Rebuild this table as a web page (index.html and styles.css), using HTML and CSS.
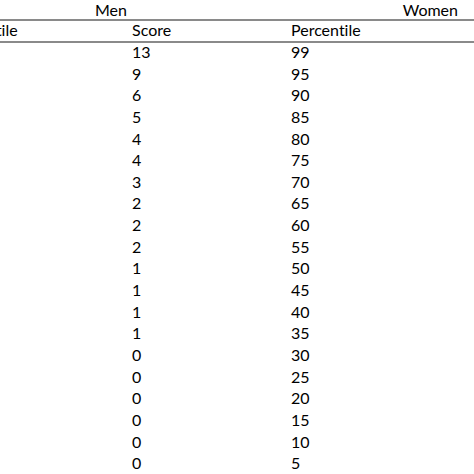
FILE: index.html
```html
<!DOCTYPE html>
<html>
<head>
<meta charset="utf-8">
<link rel="stylesheet" href="styles.css">
</head>
<body>
<div class="table">
  <div class="group-row">
    <span class="group men">Men</span>
    <span class="group women">Women</span>
  </div>
  <div class="row head">
    <span class="c1">Percentile</span>
    <span class="c2">Score</span>
    <span class="c3">Percentile</span>
  </div>
  <div class="body">
    <div class="row"><span class="c1"></span><span class="c2">13</span><span class="c3">99</span></div>
    <div class="row"><span class="c1"></span><span class="c2">9</span><span class="c3">95</span></div>
    <div class="row"><span class="c1"></span><span class="c2">6</span><span class="c3">90</span></div>
    <div class="row"><span class="c1"></span><span class="c2">5</span><span class="c3">85</span></div>
    <div class="row"><span class="c1"></span><span class="c2">4</span><span class="c3">80</span></div>
    <div class="row"><span class="c1"></span><span class="c2">4</span><span class="c3">75</span></div>
    <div class="row"><span class="c1"></span><span class="c2">3</span><span class="c3">70</span></div>
    <div class="row"><span class="c1"></span><span class="c2">2</span><span class="c3">65</span></div>
    <div class="row"><span class="c1"></span><span class="c2">2</span><span class="c3">60</span></div>
    <div class="row"><span class="c1"></span><span class="c2">2</span><span class="c3">55</span></div>
    <div class="row"><span class="c1"></span><span class="c2">1</span><span class="c3">50</span></div>
    <div class="row"><span class="c1"></span><span class="c2">1</span><span class="c3">45</span></div>
    <div class="row"><span class="c1"></span><span class="c2">1</span><span class="c3">40</span></div>
    <div class="row"><span class="c1"></span><span class="c2">1</span><span class="c3">35</span></div>
    <div class="row"><span class="c1"></span><span class="c2">0</span><span class="c3">30</span></div>
    <div class="row"><span class="c1"></span><span class="c2">0</span><span class="c3">25</span></div>
    <div class="row"><span class="c1"></span><span class="c2">0</span><span class="c3">20</span></div>
    <div class="row"><span class="c1"></span><span class="c2">0</span><span class="c3">15</span></div>
    <div class="row"><span class="c1"></span><span class="c2">0</span><span class="c3">10</span></div>
    <div class="row"><span class="c1"></span><span class="c2">0</span><span class="c3">5</span></div>
  </div>
</div>
</body>
</html>
```

FILE: styles.css
```css
html, body {
  margin: 0;
  padding: 0;
  background: #ffffff;
  overflow: hidden;
}
body {
  width: 474px;
  height: 474px;
  font-family: "Lato", "Liberation Sans", sans-serif;
  font-size: 16px;
  font-variant-ligatures: none;
  font-feature-settings: "liga" 0, "clig" 0;
  color: #000000;
}
.table {
  display: flex;
  flex-direction: column;
}
.group-row {
  display: flex;
  height: 19px;
  line-height: 19px;
  border-bottom: 2px solid #8a8a8a;
}
.men {
  margin-left: 95px;
}
.women {
  margin-left: auto;
  margin-right: 16px;
}
.row {
  display: grid;
  grid-template-columns: 184px 159px 1fr;
  align-items: start;
  margin-left: -52px;
  height: 21.65px;
  line-height: 17px;
  white-space: nowrap;
}
.row.head {
  height: 20px;
  border-bottom: 2px solid #8a8a8a;
}
```
